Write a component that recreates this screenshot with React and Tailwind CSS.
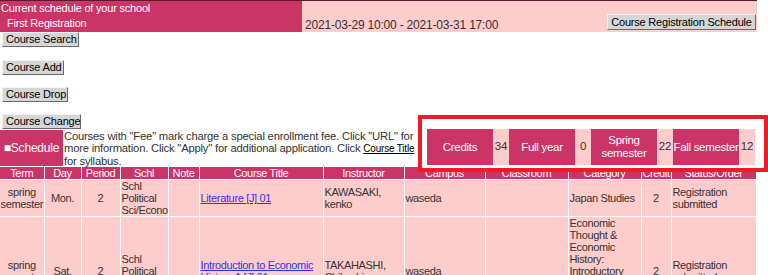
import React from 'react';

const MAGENTA = 'bg-[#cc3366]';

const Btn = ({ children, className = '' }) => (
    <button
        className={`h-[15px] px-[3px] leading-[13px] text-[11px] text-black whitespace-nowrap bg-[#d6d6d6] border border-t-[#f2f2f2] border-l-[#f2f2f2] border-r-[#6b6b6b] border-b-[#6b6b6b] ${className}`}
    >
        {children}
    </button>
);

const columns = [
    { label: 'Term', w: 'w-[44px]' },
    { label: 'Day', w: 'w-[37px]' },
    { label: 'Period', w: 'w-[39px]' },
    { label: 'Schl', w: 'w-[48px]' },
    { label: 'Note', w: 'w-[31px]' },
    { label: 'Course Title', w: 'w-[124px]' },
    { label: 'Instructor', w: 'w-[81px]' },
    { label: 'Campus', w: 'w-[81px]' },
    { label: 'Classroom', w: 'w-[83px]' },
    { label: 'Category', w: 'w-[73px]' },
    { label: 'Credit', w: 'w-[30px]' },
    { label: 'Status/Order', w: 'w-[85px]' },
];

const rows = [
    {
        term: ['spring', 'semester'],
        day: 'Mon.',
        period: '2',
        schl: ['Schl', 'Political', 'Sci/Econo'],
        title: ['Literature [J] 01'],
        instructor: ['KAWASAKI,', 'kenko'],
        campus: 'waseda',
        category: ['Japan Studies'],
        credit: '2',
        status: ['Registration', 'submitted'],
    },
    {
        term: ['spring', 'semester'],
        day: 'Sat.',
        period: '2',
        schl: ['Schl', 'Political', 'Sci/Econo'],
        title: ['Introduction to Economic', 'History A [J] 01'],
        instructor: ['TAKAHASHI,', 'Chikashi'],
        campus: 'waseda',
        category: ['Economic', 'Thought &', 'Economic', 'History:', 'Introductory', 'Lecture', '(Economic', 'History)', 'A'],
        credit: '2',
        status: ['Registration', 'submitted'],
    },
];

const Lines = ({ items }) => items.map((t, i) => <div key={i}>{t}</div>);

const credits = [
    ['Credits', '34'],
    ['Full year', '0'],
    ['Spring\nsemester', '22'],
    ['Fall semester', '12'],
];

const App = () => {
    const cell = 'border-r border-b border-white p-0 align-middle overflow-hidden whitespace-nowrap';

    return (
        <div className="relative w-[768px] h-[275px] overflow-hidden bg-white text-[11px] tracking-[-0.2px] text-[#333] font-['Liberation_Sans',Arial,sans-serif]">
            {/* title bar */}
            <div className="flex w-[757px] border-t border-[#5a1a2a]">
                <div className={`w-[302px] h-[31px] ${MAGENTA} text-white leading-[15px]`}>
                    <div className="pl-[1px]">Current schedule of your school</div>
                    <div className="pl-[7px]">First Registration</div>
                </div>
                <div className="flex-1 flex items-end justify-between bg-[#ffcccc] pl-[3px] pr-[1px]">
                    <span className="text-[12px] leading-[14px] text-[#333]">2021-03-29 10:00 - 2021-03-31 17:00</span>
                    <Btn className="mb-[2px] h-[16px] w-[149px]">Course Registration Schedule</Btn>
                </div>
            </div>

            {/* action buttons */}
            <div className="flex flex-col items-start pl-[2px]">
                <Btn className="w-[77px]">Course Search</Btn>
                <Btn className="mt-[13px] w-[62px]">Course Add</Btn>
                <Btn className="mt-[12px] w-[66px]">Course Drop</Btn>
                <Btn className="mt-[12px] w-[79px]">Course Change</Btn>
            </div>

            {/* schedule caption */}
            <div className="flex mt-[1px]">
                <div className={`w-[63px] h-[36px] ${MAGENTA} text-white text-[12px] flex items-center justify-center`}>
                    ■Schedule
                </div>
                <p className="pl-[1px] leading-[12px] text-[11.25px] whitespace-nowrap">
                    Courses with "Fee" mark charge a special enrollment fee. Click "URL" for
                    <br />
                    more information. Click "Apply" for additional application. Click{' '}
                    <span className="underline text-[10px] text-black">Course Title</span>
                    <br />
                    for syllabus.
                </p>
            </div>

            {/* course table */}
            <table className="table-fixed border-collapse w-[756px] leading-[12px] tracking-[-0.35px]">
                <colgroup>
                    {columns.map((c) => (
                        <col key={c.label} className={c.w} />
                    ))}
                </colgroup>
                <thead>
                    <tr>
                        {columns.map((c) => (
                            <th key={c.label} className={`${cell} ${MAGENTA} text-white font-normal text-center h-[12px]`}>
                                {c.label}
                            </th>
                        ))}
                    </tr>
                </thead>
                <tbody className="bg-[#ffcccc]">
                    {rows.map((r, i) => (
                        <tr key={i}>
                            <td className={`${cell} text-center`}><Lines items={r.term} /></td>
                            <td className={`${cell} text-center`}>{r.day}</td>
                            <td className={`${cell} text-center`}>{r.period}</td>
                            <td className={`${cell} pl-[1px]`}><Lines items={r.schl} /></td>
                            <td className={cell}></td>
                            <td className={`${cell} pl-[1px]`}>
                                <a href="#" className="text-[#3333ee] underline">
                                    {r.title.map((t, j) => (
                                        <React.Fragment key={j}>
                                            {j > 0 && <br />}
                                            {t}
                                        </React.Fragment>
                                    ))}
                                </a>
                            </td>
                            <td className={`${cell} pl-[1px]`}><Lines items={r.instructor} /></td>
                            <td className={`${cell} pl-[1px]`}>{r.campus}</td>
                            <td className={cell}></td>
                            <td className={`${cell} pl-[1px]`}><Lines items={r.category} /></td>
                            <td className={`${cell} text-center`}>{r.credit}</td>
                            <td className={`${cell} pl-[1px]`}><Lines items={r.status} /></td>
                        </tr>
                    ))}
                </tbody>
            </table>

            {/* highlighted credits summary */}
            <div className="absolute left-[418px] top-[115px] w-[350px] h-[57px] border-4 border-[#ed1c24] bg-white pl-[5px] pt-[10px]">
                <div className="flex h-[36px]">
                    {credits.map(([label, n]) => (
                        <React.Fragment key={label}>
                            <div className={`w-[66px] ${MAGENTA} text-white text-[11.5px] tracking-[-0.3px] leading-[13px] flex items-center justify-center text-center whitespace-pre`}>
                                {label}
                            </div>
                            <div className="w-[16px] bg-[#ffcccc] text-[11.5px] flex items-center justify-center">{n}</div>
                        </React.Fragment>
                    ))}
                </div>
            </div>
        </div>
    );
};

export default App;
